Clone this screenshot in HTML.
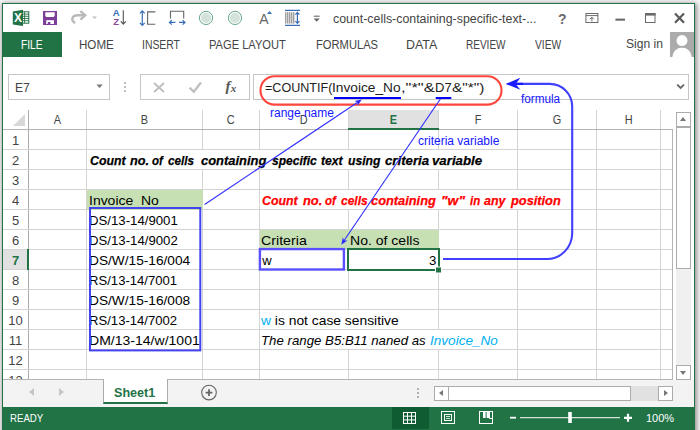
<!DOCTYPE html>
<html><head><meta charset="utf-8"><title>Excel</title>
<style>
*{box-sizing:border-box;margin:0;padding:0}
html,body{width:700px;height:430px;overflow:hidden;background:#fbfbfb}
body{font-family:"Liberation Sans",sans-serif;position:relative;color:#444}
#win{position:absolute;left:2px;top:3px;width:693px;height:440px;background:#fff;border:1px solid #217346;box-shadow:1px 1px 5px 1px rgba(60,50,55,.55)}
.a{position:absolute}
.t{position:absolute;white-space:nowrap;line-height:16px;height:16px;transform-origin:0 50%}
.vl{position:absolute;top:110px;width:1px;height:269px;background:#d4d4d4}
.hl{position:absolute;left:3px;width:669px;height:1px;background:#d4d4d4}
.ch{position:absolute;top:110px;height:19px;line-height:20px;font-size:13px;text-align:center;color:#444}
.ch span{display:inline-block;transform:scaleX(.84)}
.rh{position:absolute;left:3px;width:25px;height:19px;line-height:19px;font-size:13px;text-align:center;color:#444}
svg{position:absolute;left:0;top:0;overflow:visible}
</style></head>
<body>
<div id="win"></div>

<!-- FILE tab -->
<div class="a" style="left:3px;top:32px;width:59px;height:25px;background:#217346"></div>
<!-- avatar -->
<div class="a" style="left:670px;top:32px;width:24px;height:25px;background:#ababab"></div>

<!-- formula bar boxes -->
<div class="a" style="left:8px;top:74px;width:102px;height:26px;border:1px solid #c6c6c6;background:#fff"></div>
<div class="a" style="left:140px;top:74px;width:110px;height:26px;border:1px solid #c6c6c6;background:#fff"></div>
<div class="a" style="left:253px;top:74px;width:436px;height:26px;border:1px solid #c6c6c6;background:#fff"></div>

<!-- cell fills -->
<!-- gridlines -->
<div class="vl" style="left:86px"></div>
<div class="vl" style="left:202px"></div>
<div class="vl" style="left:259px"></div>
<div class="vl" style="left:348px"></div>
<div class="vl" style="left:438px"></div>
<div class="vl" style="left:517px"></div>
<div class="vl" style="left:596px"></div>
<div class="vl" style="left:660px"></div>
<div class="vl" style="left:28px;background:#ababab"></div>
<div class="hl" style="top:129px"></div>
<div class="hl" style="top:149px"></div>
<div class="hl" style="top:169px"></div>
<div class="hl" style="top:189px"></div>
<div class="hl" style="top:209px"></div>
<div class="hl" style="top:229px"></div>
<div class="hl" style="top:249px"></div>
<div class="hl" style="top:269px"></div>
<div class="hl" style="top:289px"></div>
<div class="hl" style="top:309px"></div>
<div class="hl" style="top:329px"></div>
<div class="hl" style="top:349px"></div>
<div class="hl" style="top:369px"></div>
<div class="a" style="left:202px;top:150px;width:1px;height:19px;background:#fff"></div>
<div class="a" style="left:259px;top:150px;width:1px;height:19px;background:#fff"></div>
<div class="a" style="left:348px;top:150px;width:1px;height:19px;background:#fff"></div>
<div class="a" style="left:438px;top:150px;width:1px;height:19px;background:#fff"></div>
<div class="a" style="left:348px;top:190px;width:1px;height:19px;background:#fff"></div>
<div class="a" style="left:438px;top:190px;width:1px;height:19px;background:#fff"></div>
<div class="a" style="left:517px;top:190px;width:1px;height:19px;background:#fff"></div>
<div class="a" style="left:348px;top:310px;width:1px;height:19px;background:#fff"></div>
<div class="a" style="left:348px;top:330px;width:1px;height:19px;background:#fff"></div>
<div class="a" style="left:438px;top:330px;width:1px;height:19px;background:#fff"></div>
<div class="a" style="left:87px;top:190px;width:116px;height:20px;background:#c6e0b4"></div>
<div class="a" style="left:260px;top:230px;width:179px;height:20px;background:#c6e0b4"></div>
<div class="a" style="left:3px;top:129px;width:670px;height:1px;background:#b4b4b4"></div>
<div class="a" style="left:672px;top:129px;width:1px;height:251px;background:#b4b4b4"></div>
<!-- header select-all triangle -->
<div class="a" style="left:13px;top:114px;width:0;height:0;border-left:12px solid transparent;border-bottom:12px solid #d8d8d8"></div>
<div class="ch" style="left:29px;width:57px;"><span>A</span></div>
<div class="ch" style="left:87px;width:115px;"><span>B</span></div>
<div class="ch" style="left:203px;width:56px;"><span>C</span></div>
<div class="ch" style="left:260px;width:88px;"><span>D</span></div>
<div class="a" style="left:349px;top:110px;width:89px;height:18px;background:#e1e1e1"></div>
<div class="a" style="left:348px;top:128px;width:91px;height:2px;background:#217346"></div>
<div class="ch" style="left:349px;width:89px;color:#217346;font-weight:bold;"><span>E</span></div>
<div class="ch" style="left:439px;width:78px;"><span>F</span></div>
<div class="ch" style="left:518px;width:78px;"><span>G</span></div>
<div class="ch" style="left:597px;width:63px;"><span>H</span></div>
<div class="rh" style="top:131px;">1</div>
<div class="rh" style="top:151px;">2</div>
<div class="rh" style="top:171px;">3</div>
<div class="rh" style="top:191px;">4</div>
<div class="rh" style="top:211px;">5</div>
<div class="rh" style="top:231px;">6</div>
<div class="a" style="left:3px;top:250px;width:24px;height:19px;background:#e1e1e1"></div>
<div class="a" style="left:27px;top:249px;width:2px;height:21px;background:#217346"></div>
<div class="rh" style="top:251px;color:#217346;font-weight:bold;">7</div>
<div class="rh" style="top:271px;">8</div>
<div class="rh" style="top:291px;">9</div>
<div class="rh" style="top:311px;">10</div>
<div class="rh" style="top:331px;">11</div>
<div class="rh" style="top:351px;">12</div>
<div class="rh" style="top:371px;">13</div>

<!-- vertical scrollbar -->
<div class="a" style="left:676px;top:269px;width:15px;height:96px;background:#f0f0f0"></div>
<div class="a" style="left:676px;top:112px;width:15px;height:15px;border:1px solid #ababab;background:#fff"></div>
<div class="a" style="left:680px;top:117px;width:0;height:0;border-left:3.5px solid transparent;border-right:3.5px solid transparent;border-bottom:4px solid #777"></div>
<div class="a" style="left:676px;top:127px;width:15px;height:142px;border:1px solid #ababab;background:#fff"></div>
<div class="a" style="left:676px;top:365px;width:15px;height:15px;border:1px solid #ababab;background:#fff"></div>
<div class="a" style="left:680px;top:371px;width:0;height:0;border-left:3.5px solid transparent;border-right:3.5px solid transparent;border-top:4px solid #777"></div>

<!-- sheet tab bar -->
<div class="a" style="left:3px;top:380px;width:691px;height:27px;background:#f3f3f3"></div>
<div class="a" style="left:3px;top:379px;width:670px;height:1px;background:#b4b4b4"></div>
<div class="a" style="left:103px;top:379px;width:65px;height:25px;background:#fff;border-left:1px solid #ababab;border-right:1px solid #ababab;border-bottom:2px solid #217346"></div>
<!-- nav arrows -->
<div class="a" style="left:29px;top:388px;width:0;height:0;border-top:4px solid transparent;border-bottom:4px solid transparent;border-right:5px solid #c6c6c6"></div>
<div class="a" style="left:59px;top:388px;width:0;height:0;border-top:4px solid transparent;border-bottom:4px solid transparent;border-left:5px solid #c6c6c6"></div>
<!-- hscroll -->
<div class="a" style="left:417px;top:388px;width:2px;height:2px;background:#b0b0b0"></div>
<div class="a" style="left:417px;top:392px;width:2px;height:2px;background:#b0b0b0"></div>
<div class="a" style="left:417px;top:396px;width:2px;height:2px;background:#b0b0b0"></div>
<div class="a" style="left:434px;top:386px;width:239px;height:15px;background:#e1e1e1"></div>
<div class="a" style="left:434px;top:386px;width:15px;height:15px;border:1px solid #ababab;background:#fff"></div>
<div class="a" style="left:439px;top:390px;width:0;height:0;border-top:3.5px solid transparent;border-bottom:3.5px solid transparent;border-right:4.5px solid #777"></div>
<div class="a" style="left:448px;top:386px;width:183px;height:15px;border:1px solid #ababab;background:#fff"></div>
<div class="a" style="left:658px;top:386px;width:15px;height:15px;border:1px solid #ababab;background:#fff"></div>
<div class="a" style="left:664px;top:390px;width:0;height:0;border-top:3.5px solid transparent;border-bottom:3.5px solid transparent;border-left:4.5px solid #777"></div>

<!-- status bar -->
<div class="a" style="left:3px;top:407px;width:691px;height:23px;background:#217346"></div>
<div class="a" style="left:392px;top:407px;width:37px;height:22px;background:#0f5c32"></div>

<div class="t" style="left:333.00px;top:11.0px;font-size:12px;color:#444;transform:scaleX(1.0306)">count-cells-containing-specific-text-...</div>
<div class="t" style="left:21.45px;top:36.5px;font-size:12px;color:#fff;transform:scaleX(0.8500)">FILE</div>
<div class="t" style="left:78.73px;top:36.5px;font-size:12px;color:#444;transform:scaleX(0.9657)">HOME</div>
<div class="t" style="left:141.83px;top:36.5px;font-size:12px;color:#444;transform:scaleX(0.8674)">INSERT</div>
<div class="t" style="left:209.07px;top:36.5px;font-size:12px;color:#444;transform:scaleX(0.9268)">PAGE LAYOUT</div>
<div class="t" style="left:315.67px;top:36.5px;font-size:12px;color:#444;transform:scaleX(0.9308)">FORMULAS</div>
<div class="t" style="left:405.57px;top:36.5px;font-size:12px;color:#444;transform:scaleX(1.0345)">DATA</div>
<div class="t" style="left:465.77px;top:36.5px;font-size:12px;color:#444;transform:scaleX(0.8348)">REVIEW</div>
<div class="t" style="left:535.00px;top:36.5px;font-size:12px;color:#444;transform:scaleX(0.8516)">VIEW</div>
<div class="t" style="left:626.07px;top:36.0px;font-size:13px;color:#444;transform:scaleX(0.9289)">Sign in</div>
<div class="t" style="left:14.67px;top:80.0px;font-size:13px;color:#444;transform:scaleX(0.9333)">E7</div>
<div class="t" style="left:264.63px;top:79.5px;font-size:13px;color:#222;transform:scaleX(0.9662)">=COUNTIF(</div>
<div class="t" style="left:332.45px;top:79.5px;font-size:13px;color:#222;transform:scaleX(1.0547)">Invoice_No</div>
<div class="t" style="left:400.73px;top:79.5px;font-size:13px;color:#222;transform:scaleX(1.2692)">,"*"&amp;</div>
<div class="t" style="left:435.00px;top:79.5px;font-size:13px;color:#222;transform:scaleX(1.0000)">D7</div>
<div class="t" style="left:451.60px;top:79.5px;font-size:13px;color:#222;transform:scaleX(1.1852)">&amp;"*")</div>
<div class="t" style="left:89.50px;top:152.5px;font-size:13px;color:#000;font-weight:bold;font-style:italic;-webkit-text-stroke:.25px;transform:scaleX(0.9474)">Count</div>
<div class="t" style="left:130.00px;top:152.5px;font-size:13px;color:#000;font-weight:bold;font-style:italic;-webkit-text-stroke:.25px;transform:scaleX(0.9789)">no.</div>
<div class="t" style="left:152.34px;top:152.5px;font-size:13px;color:#000;font-weight:bold;font-style:italic;-webkit-text-stroke:.25px;transform:scaleX(0.8800)">of</div>
<div class="t" style="left:168.40px;top:152.5px;font-size:13px;color:#000;font-weight:bold;font-style:italic;-webkit-text-stroke:.25px;transform:scaleX(0.9000)">cells</div>
<div class="t" style="left:201.40px;top:152.5px;font-size:13px;color:#000;font-weight:bold;font-style:italic;-webkit-text-stroke:.25px;transform:scaleX(0.9955)">containing</div>
<div class="t" style="left:272.00px;top:152.5px;font-size:13px;color:#000;font-weight:bold;font-style:italic;-webkit-text-stroke:.25px;transform:scaleX(0.9250)">specific</div>
<div class="t" style="left:321.30px;top:152.5px;font-size:13px;color:#000;font-weight:bold;font-style:italic;-webkit-text-stroke:.25px;transform:scaleX(0.9375)">text</div>
<div class="t" style="left:348.00px;top:152.5px;font-size:13px;color:#000;font-weight:bold;font-style:italic;-webkit-text-stroke:.25px;transform:scaleX(0.9343)">using</div>
<div class="t" style="left:384.60px;top:152.5px;font-size:13px;color:#000;font-weight:bold;font-style:italic;-webkit-text-stroke:.25px;transform:scaleX(1.0163)">criteria</div>
<div class="t" style="left:432.10px;top:152.5px;font-size:13px;color:#000;font-weight:bold;font-style:italic;-webkit-text-stroke:.25px;transform:scaleX(1.0184)">variable</div>
<div class="t" style="left:88.73px;top:192.5px;font-size:13px;color:#000;transform:scaleX(1.0734)">Invoice_No</div>
<div class="t" style="left:88.98px;top:212.5px;font-size:13px;color:#000;transform:scaleX(1.0151)">DS/13-14/9001</div>
<div class="t" style="left:88.98px;top:232.5px;font-size:13px;color:#000;transform:scaleX(1.0151)">DS/13-14/9002</div>
<div class="t" style="left:88.95px;top:252.5px;font-size:13px;color:#000;transform:scaleX(1.0526)">DS/W/15-16/004</div>
<div class="t" style="left:88.99px;top:272.5px;font-size:13px;color:#000;transform:scaleX(1.0081)">RS/13-14/7001</div>
<div class="t" style="left:88.95px;top:292.5px;font-size:13px;color:#000;transform:scaleX(1.0526)">DS/W/15-16/008</div>
<div class="t" style="left:88.99px;top:312.5px;font-size:13px;color:#000;transform:scaleX(1.0081)">RS/13-14/7002</div>
<div class="t" style="left:88.92px;top:332.5px;font-size:13px;color:#000;transform:scaleX(1.0792)">DM/13-14/w/1001</div>
<div class="t" style="left:262.30px;top:192.5px;font-size:13px;color:#ff0000;font-weight:bold;font-style:italic;-webkit-text-stroke:.25px;transform:scaleX(0.9500)">Count</div>
<div class="t" style="left:302.50px;top:192.5px;font-size:13px;color:#ff0000;font-weight:bold;font-style:italic;-webkit-text-stroke:.25px;transform:scaleX(0.9895)">no.</div>
<div class="t" style="left:324.84px;top:192.5px;font-size:13px;color:#ff0000;font-weight:bold;font-style:italic;-webkit-text-stroke:.25px;transform:scaleX(0.8800)">of</div>
<div class="t" style="left:340.70px;top:192.5px;font-size:13px;color:#ff0000;font-weight:bold;font-style:italic;-webkit-text-stroke:.25px;transform:scaleX(0.9241)">cells</div>
<div class="t" style="left:371.30px;top:192.5px;font-size:13px;color:#ff0000;font-weight:bold;font-style:italic;-webkit-text-stroke:.25px;transform:scaleX(0.9864)">containing</div>
<div class="t" style="left:441.03px;top:192.5px;font-size:13px;color:#ff0000;font-weight:bold;font-style:italic;-webkit-text-stroke:.25px;transform:scaleX(1.0682)">"w"</div>
<div class="t" style="left:470.10px;top:192.5px;font-size:13px;color:#ff0000;font-weight:bold;font-style:italic;-webkit-text-stroke:.25px;transform:scaleX(0.8909)">in</div>
<div class="t" style="left:484.40px;top:192.5px;font-size:13px;color:#ff0000;font-weight:bold;font-style:italic;-webkit-text-stroke:.25px;transform:scaleX(0.9565)">any</div>
<div class="t" style="left:510.70px;top:192.5px;font-size:13px;color:#ff0000;font-weight:bold;font-style:italic;-webkit-text-stroke:.25px;transform:scaleX(0.9840)">position</div>
<div class="t" style="left:261.21px;top:232.5px;font-size:13px;color:#000;transform:scaleX(1.0927)">Criteria</div>
<div class="t" style="left:350.32px;top:232.5px;font-size:13px;color:#000;transform:scaleX(1.0794)">No. of cells</div>
<div class="t" style="left:262.30px;top:252.5px;font-size:13px;color:#000;transform:scaleX(1.0000)">w</div>
<div class="t" style="left:428.58px;top:252.5px;font-size:13px;color:#000;transform:scaleX(1.0167)">3</div>
<div class="t" style="left:261.24px;top:312.5px;font-size:13px;color:#000;transform:scaleX(1.0648)"><span style="color:#00b0f0">w</span> is not case sensitive</div>
<div class="t" style="left:261.28px;top:332.5px;font-size:13px;color:#000;font-style:italic;transform:scaleX(1.0188)">The range B5:B11 naned as</div>
<div class="t" style="left:430.26px;top:332.5px;font-size:13px;color:#00b0f0;font-style:italic;transform:scaleX(1.0438)">Invoice_No</div>
<div class="t" style="left:269.60px;top:104.7px;font-size:12px;color:#1616ff;transform:scaleX(0.9968)">range name</div>
<div class="t" style="left:418.00px;top:132.5px;font-size:12px;color:#1616ff;transform:scaleX(1.0000)">criteria variable</div>
<div class="t" style="left:521.30px;top:91.4px;font-size:12px;color:#1616ff;transform:scaleX(0.9775)">formula</div>
<div class="t" style="left:9.62px;top:410.0px;font-size:11px;color:#fff;transform:scaleX(0.8784)">READY</div>
<div class="t" style="left:646.00px;top:410.0px;font-size:11px;color:#fff;transform:scaleX(1.0000)">100%</div>
<div class="t" style="left:114.03px;top:385.0px;font-size:13px;color:#217346;font-weight:bold;transform:scaleX(0.9667)">Sheet1</div>

<svg width="700" height="430" viewBox="0 0 700 430">
<defs>
</defs>
<!-- ===== annotations ===== -->
<!-- red rounded box around formula -->
<rect x="260.5" y="76.2" width="241" height="28.4" rx="14.1" ry="14.1" fill="none" stroke="#ff463c" stroke-width="2.1"/>
<!-- underlines -->
<line x1="334" y1="98" x2="401" y2="98" stroke="#0000ff" stroke-width="2"/>
<line x1="435.7" y1="98" x2="451.3" y2="98" stroke="#0000ff" stroke-width="2"/>
<!-- arrow 1: B4 -> Invoice_No underline -->
<line x1="204.6" y1="204.5" x2="358.5" y2="101.7" stroke="#3030ff" stroke-width="1.15"/>
<polygon points="361.8,99.4 354.4,101 357.6,102.3 357.5,105.7" fill="#2a2aff"/>
<!-- arrow 2: D7 underline -> D7 cell -->
<line x1="440.5" y1="98.7" x2="343.6" y2="241.3" stroke="#3030ff" stroke-width="1.15"/>
<polygon points="341.3,244.7 342.9,237.3 344.1,240.6 347.5,240.5" fill="#2a2aff"/>
<!-- big curve E7 -> formula -->
<path d="M443 259 H547 A25.2 26 0 0 0 572.2 233 V106.5 A22.5 22.6 0 0 0 549.7 83.9 H514" fill="none" stroke="#4040ff" stroke-width="2.1"/>
<polygon points="505.6,83.9 520.4,77.8 515.6,83.9 520.4,89.8" fill="#1a1aff"/>
<line x1="513" y1="83.9" x2="523" y2="83.9" stroke="#1a1aff" stroke-width="2.3"/>
<!-- blue boxes -->
<rect x="90" y="208" width="110.3" height="142.4" fill="none" stroke="#4343f0" stroke-width="2"/>
<rect x="259.9" y="249.1" width="84" height="20.4" fill="none" stroke="#5a50ff" stroke-width="2.4"/>
<!-- green selection E7 -->
<rect x="348" y="249" width="91" height="21" fill="none" stroke="#217346" stroke-width="2"/>
<rect x="435" y="266.5" width="7" height="7" fill="#fff"/>
<rect x="436" y="267.5" width="5" height="5" fill="#217346"/>
<!-- ===== title bar icons ===== -->
<!-- excel logo -->
<g>
<rect x="22.5" y="11.8" width="6.3" height="11.4" fill="#fff" stroke="#217346" stroke-width="1"/>
<path d="M24.6 12v11 M22 14.1h7 M22 16.3h7 M22 18.5h7 M22 20.7h7" stroke="#217346" stroke-width="0.9" fill="none"/>
<polygon points="12.8,11.4 23,9.7 23,25.9 12.8,24.4" fill="#217346"/>
<text x="17.9" y="22.4" font-family="Liberation Sans, sans-serif" font-weight="bold" font-size="12" fill="#fff" text-anchor="middle">X</text>
</g>
<!-- save -->
<g>
<rect x="43" y="11" width="14" height="14" fill="#7d3f98"/>
<polygon points="45.3,12.2 54.7,12.2 54.7,16 53.6,17.1 46.4,17.1 45.3,16" fill="#fff"/>
<rect x="46.2" y="20.2" width="7.8" height="3.8" fill="#fff"/>
<rect x="47.8" y="22" width="2.6" height="2" fill="#7d3f98"/>
</g>
<!-- redo (disabled) -->
<path d="M75.2 23 C70.6 20.4 71.6 15.2 77.6 15.2 H84.4" fill="none" stroke="#b9b9b9" stroke-width="2.4"/>
<path d="M80.4 11.2 L85.2 15.2 L80.4 19.6" fill="none" stroke="#b9b9b9" stroke-width="2.4"/>
<polygon points="92,16.4 97,16.4 94.5,19" fill="#c0c0c0"/>
<!-- sort A-Z -->
<text x="116.1" y="16.4" font-family="Liberation Sans, sans-serif" font-weight="bold" font-size="9.6" fill="#3a6fb5" text-anchor="middle">A</text>
<text x="116.1" y="24.8" font-family="Liberation Sans, sans-serif" font-weight="bold" font-size="9.6" fill="#8a4a9e" text-anchor="middle">Z</text>
<path d="M123.3 10.2 V24 M120.8 21.3 L123.3 24.2 L125.8 21.3" fill="none" stroke="#555" stroke-width="1.1"/>
<!-- row height -->
<path d="M142.3 11 V25 M139.9 13.4 L142.3 10.8 L144.7 13.4 M139.9 22.8 L142.3 25.4 L144.7 22.8" fill="none" stroke="#3a6fb5" stroke-width="1.2"/>
<path d="M155.3 11.9 H147.6 V24.2 H155.3" fill="none" stroke="#666" stroke-width="1.1"/>
<!-- column width -->
<path d="M170.5 18.6 V11.2 H183.7 V18.6" fill="none" stroke="#666" stroke-width="1.1"/>
<path d="M169.4 22.4 H175.4 M171.8 20.2 L169.4 22.4 L171.8 24.6 M179 22.4 H185 M182.6 20.2 L185 22.4 L182.6 24.6" fill="none" stroke="#3a6fb5" stroke-width="1.2"/>
<!-- circles -->
<circle cx="206" cy="17.9" r="6.6" fill="#fff" stroke="#4f9c78" stroke-width="0.9"/>
<circle cx="206" cy="17.9" r="5.1" fill="#d3e3db"/>
<circle cx="235" cy="17.9" r="6.6" fill="#fff" stroke="#4f9c78" stroke-width="0.9"/>
<circle cx="235" cy="17.9" r="5.1" fill="#d3e3db"/>
<!-- A grow font -->
<text x="264" y="24" font-family="Liberation Sans, sans-serif" font-size="14" fill="#666" text-anchor="middle">A</text>
<polygon points="267,13.9 272,13.9 269.5,11" fill="#3a6fb5"/>
<!-- autofit -->
<path d="M285 10.4 H300 M285 25.4 H300" stroke="#3a6fb5" stroke-width="1.2" fill="none"/>
<path d="M285.8 12.2 V23.6 M287.8 12.2 V23.6 M289.8 12.2 V23.6 M291.8 12.2 V23.6 M293.8 12.2 V23.6" stroke="#666" stroke-width="0.9" fill="none"/>
<path d="M297.4 12.6 V23.2 M295.4 14.6 L297.4 12.4 L299.4 14.6 M295.4 21.2 L297.4 23.4 L299.4 21.2" fill="none" stroke="#3a6fb5" stroke-width="1.2"/>
<!-- customize QAT -->
<path d="M313.8 16.2 H319.6" stroke="#666" stroke-width="1.1"/>
<polygon points="313.6,18.6 319.8,18.6 316.7,21.8" fill="#666"/>
<!-- window controls -->
<text x="562.3" y="23.6" font-family="Liberation Sans, sans-serif" font-weight="bold" font-size="14" fill="#6a6a6a" text-anchor="middle">?</text>
<rect x="585.9" y="13.5" width="12" height="9" fill="none" stroke="#6a6a6a" stroke-width="1"/>
<path d="M586 15.6 H598" stroke="#6a6a6a" stroke-width="1"/>
<path d="M591.9 21.4 V17.4 M589.9 19.2 L591.9 17.2 L593.9 19.2" fill="none" stroke="#6a6a6a" stroke-width="1"/>
<rect x="615.4" y="18.6" width="9.6" height="2.1" fill="#6a6a6a"/>
<rect x="645.5" y="13.5" width="9.5" height="9" fill="none" stroke="#6a6a6a" stroke-width="1"/>
<rect x="645" y="13" width="10.5" height="2.6" fill="#6a6a6a"/>
<path d="M675 13.6 L684 22.8 M684 13.6 L675 22.8" stroke="#5a5a5a" stroke-width="2.2" fill="none"/>
<!-- ===== formula bar icons ===== -->
<polygon points="96.4,84.6 102.8,84.6 99.6,88" fill="#777"/>
<rect x="124" y="82" width="2" height="2" fill="#c0c0c0"/><rect x="124" y="86" width="2" height="2" fill="#c0c0c0"/><rect x="124" y="90" width="2" height="2" fill="#c0c0c0"/>
<path d="M154 83 L164 92 M164 83 L154 92" stroke="#c0c0c0" stroke-width="2" fill="none"/>
<path d="M189.6 87.6 L193.8 91.8 L201 82.6" stroke="#c0c0c0" stroke-width="2.4" fill="none"/>
<text x="225.4" y="91.4" font-family="Liberation Serif, serif" font-style="italic" font-weight="bold" font-size="15" fill="#555">f</text>
<text x="230.8" y="91.8" font-family="Liberation Serif, serif" font-style="italic" font-weight="bold" font-size="11" fill="#555">x</text>
<path d="M677.2 84.6 L680.6 88 L684 84.6" stroke="#666" stroke-width="1.8" fill="none"/>
<!-- ===== sheet bar ===== -->
<circle cx="209" cy="392.6" r="7.3" fill="none" stroke="#666" stroke-width="1.1"/>
<path d="M205.6 392.6 H212.4 M209 389.2 V396" stroke="#666" stroke-width="1.8"/>
<!-- ===== status bar icons ===== -->
<g stroke="#fff" fill="none">
<rect x="403.5" y="412.5" width="12" height="11" stroke-width="1"/>
<path d="M407.5 412.5 V423.5 M411.5 412.5 V423.5 M403.5 416.2 H415.5 M403.5 419.9 H415.5" stroke-width="1"/>
<rect x="441.5" y="411.5" width="13" height="12" stroke-width="1"/>
<rect x="444.5" y="414.5" width="7" height="6" stroke-width="1"/>
<path d="M446 416.5 H450 M446 418.5 H450" stroke-width="0.8"/>
<rect x="479.5" y="411.5" width="13" height="12" stroke-width="1"/>
</g>
<path d="M483 411.5 H489.5 V418.5 H492.5" fill="none" stroke="#fff" stroke-width="1"/>
<rect x="483" y="412" width="2.6" height="6" fill="#fff"/><rect x="486.6" y="412" width="2.6" height="6" fill="#fff"/>
<rect x="510" y="416.8" width="6" height="1.8" fill="#fff"/>
<rect x="520" y="417.2" width="100" height="1" fill="#fff"/>
<rect x="568.2" y="412" width="3.6" height="11" fill="#fff"/>
<path d="M624 417.8 H632 M628 413.8 V421.8" stroke="#fff" stroke-width="2.2"/>
<!-- avatar -->
<clipPath id="avc"><rect x="670" y="32" width="24" height="25"/></clipPath>
<g clip-path="url(#avc)">
<ellipse cx="682" cy="58" rx="9.8" ry="10.6" fill="#fff"/>
<circle cx="682" cy="40.6" r="6.2" fill="#fff" stroke="#ababab" stroke-width="1.4"/>
</g>

</svg>
</body></html>
